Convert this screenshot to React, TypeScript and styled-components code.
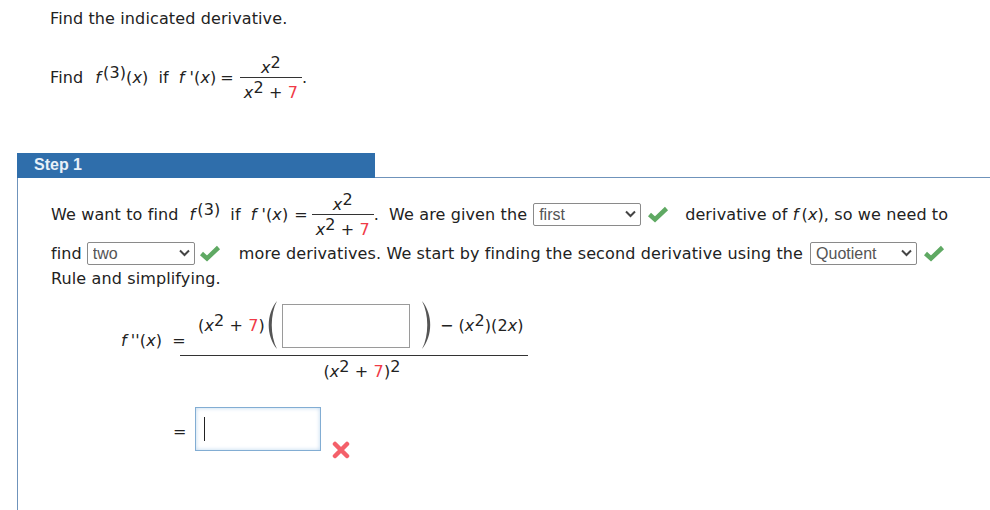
import React from 'react'
import styled, { createGlobalStyle } from 'styled-components'

const GlobalStyle = createGlobalStyle`
  html, body {
    margin: 0;
    padding: 0;
    background: #fff;
    overflow: hidden;
  }
  body {
    font-family: "DejaVu Sans", Verdana, sans-serif;
    font-size: 16px;
    letter-spacing: 0.12px;
    color: #222;
  }
`

const Page = styled.div`
  width: 990px;
  height: 510px;
  overflow: hidden;
`

const Question = styled.div`
  height: 153px;
  padding: 10px 0 0 50px;
  box-sizing: border-box;
`

const Heading = styled.div`
  height: 18px;
  line-height: 18px;
`

const FindLine = styled.div`
  margin-top: 24px;
  height: 50px;
  display: flex;
  align-items: center;
`

const Gap = styled.span<{ $w: number }>`
  display: inline-block;
  width: ${(p) => p.$w}px;
  flex: none;
`

const I = styled.i`
  font-style: italic;
`

const F = styled.i`
  font-style: italic;
  margin-right: 2px;
`

const Sup = styled.span`
  font-size: 16px;
  position: relative;
  top: -5px;
`

const Seven = styled.span`
  color: #f03a47;
`

const Frac = styled.span<{ $w: number }>`
  display: inline-flex;
  flex-direction: column;
  align-items: center;
  width: ${(p) => p.$w}px;
  flex: none;
`

const Num = styled.span`
  width: 100%;
  height: 24px;
  line-height: 30px;
  text-align: center;
  border-bottom: 1px solid #333;
  box-sizing: content-box;
  white-space: nowrap;
`

const Den = styled.span`
  height: 24px;
  line-height: 30px;
  white-space: nowrap;
`

const Step = styled.div`
  margin-left: 17px;
`

const StepHead = styled.div`
  height: 24px;
  border-bottom: 1px solid #6f93bb;
`

const StepTab = styled.div`
  width: 358px;
  height: 25px;
  background: #2f6eab;
  color: #e8f0f8;
  font-family: "Liberation Sans", Arial, sans-serif;
  font-weight: bold;
  font-size: 16px;
  letter-spacing: 0;
  line-height: 23px;
  padding-left: 17px;
  box-sizing: border-box;
`

const StepBody = styled.div`
  height: 332px;
  border-left: 1px solid #6f93bb;
  padding: 11px 0 0 33px;
  box-sizing: border-box;
`

const Row = styled.div<{ $h: number }>`
  height: ${(p) => p.$h}px;
  display: flex;
  align-items: center;
  white-space: nowrap;
`

const ChoiceWrap = styled.span<{ $w: number }>`
  position: relative;
  display: block;
  width: ${(p) => p.$w}px;
  height: 23px;
  flex: none;
`

const Choice = styled.select`
  appearance: none;
  display: block;
  width: 100%;
  height: 100%;
  font-family: "Liberation Sans", Arial, sans-serif;
  font-size: 16px;
  color: #555;
  background: #fff;
  border: 1px solid #8a8a8a;
  border-radius: 2px;
  padding: 0 0 0 5px;
`

const Chevron = styled.svg`
  position: absolute;
  right: 5px;
  top: 7px;
`

const Mark = styled.svg`
  flex: none;
  display: block;
`

const Equation = styled.div`
  margin-top: 6px;
  display: grid;
  grid-template-columns: 129px 348px;
`

const Lhs = styled.div`
  grid-column: 1;
  height: 90px;
  padding: 0 0 0 70px;
  display: flex;
  align-items: center;
  box-sizing: border-box;
`

const BigFrac = styled.div`
  grid-column: 2;
  display: flex;
  flex-direction: column;
`

const BigNum = styled.div`
  height: 60px;
  display: flex;
  align-items: center;
  border-bottom: 1px solid #333;
  padding-left: 18px;
  white-space: nowrap;
  box-sizing: content-box;
`

const BigDen = styled.div`
  height: 29px;
  line-height: 32px;
  padding-left: 16px;
  text-align: center;
  white-space: nowrap;
`

const AnswerBox = styled.div`
  width: 128px;
  height: 44px;
  margin-top: 2px;
  border: 1px solid #9a9a9a;
  box-sizing: border-box;
  flex: none;
`

const AnswerRow = styled.div`
  margin-top: 22px;
  margin-left: 122px;
  display: flex;
  align-items: flex-start;
`

const EqSign = styled.span`
  width: 22px;
  line-height: 50px;
  flex: none;
`

const FocusBox = styled.div`
  width: 126px;
  height: 44px;
  flex: none;
  border: 1px solid #82add3;
  box-shadow: inset 0 0 4px #bcd6ee;
  box-sizing: border-box;
  display: flex;
  align-items: center;
  padding-left: 8px;
`

const Caret = styled.span`
  width: 1px;
  height: 24px;
  background: #222;
`

const Wrong = styled.svg`
  flex: none;
  margin: 34px 0 0 11px;
  display: block;
`

const Check = () => (
  <Mark width="22" height="20" viewBox="0 0 22 20">
    <path d="M2.5 10.5 L8 15.5 L19.5 4.5" fill="none" stroke="#5fa963" strokeWidth="4.5" />
  </Mark>
)

const LeftParen = () => (
  <Mark width="13" height="48" viewBox="0 0 13 48">
    <path d="M12 0 C1 13 1 35 12 48 C5 35 5 13 12 0 Z" fill="#555" />
  </Mark>
)

const RightParen = () => (
  <Mark width="13" height="48" viewBox="0 0 13 48">
    <path d="M1 0 C12 13 12 35 1 48 C8 35 8 13 1 0 Z" fill="#555" />
  </Mark>
)

const Select = ({ w, value }: { w: number; value: string }) => (
  <ChoiceWrap $w={w}>
    <Choice defaultValue={value}>
      <option>{value}</option>
    </Choice>
    <Chevron width="11" height="8" viewBox="0 0 11 8">
      <path d="M1 1.5 L5.5 6 L10 1.5" fill="none" stroke="#444" strokeWidth="2" />
    </Chevron>
  </ChoiceWrap>
)

const Xsq = () => (
  <>
    <I>x</I>
    <Sup>2</Sup>
  </>
)

const Fprime = () => (
  <Frac $w={62}>
    <Num>
      <Xsq />
    </Num>
    <Den>
      <Xsq /> + <Seven>7</Seven>
    </Den>
  </Frac>
)

export default function App() {
  return (
    <Page>
      <GlobalStyle />
      <Question>
        <Heading>Find the indicated derivative.</Heading>
        <FindLine>
          Find
          <Gap $w={12} />
          <F>f</F>
          <Sup>(3)</Sup>(<I>x</I>)
          <Gap $w={10} />
          if
          <Gap $w={10} />
          <F>f</F>
          <Gap $w={3} />'(<I>x</I>)
          <Gap $w={4} />=
          <Gap $w={6} />
          <Fprime />.
        </FindLine>
      </Question>
      <Step>
        <StepHead>
          <StepTab>Step 1</StepTab>
        </StepHead>
        <StepBody>
          <Row $h={50}>
            We want to find
            <Gap $w={11} />
            <F>f</F>
            <Sup>(3)</Sup>
            <Gap $w={10} />
            if
            <Gap $w={10} />
            <F>f</F>
            <Gap $w={3} />'(<I>x</I>)
            <Gap $w={6} />=
            <Gap $w={4} />
            <Fprime />.
            <Gap $w={10} />
            We are given the
            <Gap $w={6} />
            <Select w={108} value="first" />
            <Gap $w={6} />
            <Check />
            <Gap $w={16} />
            derivative of <F>&nbsp;f</F>
            <Gap $w={1} />(<I>x</I>), so we need to
          </Row>
          <Row $h={28}>
            find
            <Gap $w={5} />
            <Select w={108} value="two" />
            <Gap $w={4} />
            <Check />
            <Gap $w={18} />
            more derivatives. We start by finding the second derivative using the
            <Gap $w={7} />
            <Select w={107} value="Quotient" />
            <Gap $w={6} />
            <Check />
          </Row>
          <Row $h={22}>Rule and simplifying.</Row>
          <Equation>
            <Lhs>
              <F>f</F>
              <Gap $w={2} />''(<I>x</I>)
              <Gap $w={10} />=
            </Lhs>
            <BigFrac>
              <BigNum>
                (<Xsq />
                &nbsp;+&nbsp;<Seven>7</Seven>)
                <LeftParen />
                <Gap $w={4} />
                <AnswerBox />
                <Gap $w={11} />
                <RightParen />
                <Gap $w={6} />−<Gap $w={5} />(<Xsq />)(2<I>x</I>)
              </BigNum>
              <BigDen>
                (<Xsq /> + <Seven>7</Seven>)<Sup>2</Sup>
              </BigDen>
            </BigFrac>
          </Equation>
          <AnswerRow>
            <EqSign>=</EqSign>
            <FocusBox>
              <Caret />
            </FocusBox>
            <Wrong width="18" height="18" viewBox="0 0 18 18">
              <path d="M3 3 L15 15 M15 3 L3 15" stroke="#f4606a" strokeWidth="4.5" strokeLinecap="round" />
            </Wrong>
          </AnswerRow>
        </StepBody>
      </Step>
    </Page>
  )
}
